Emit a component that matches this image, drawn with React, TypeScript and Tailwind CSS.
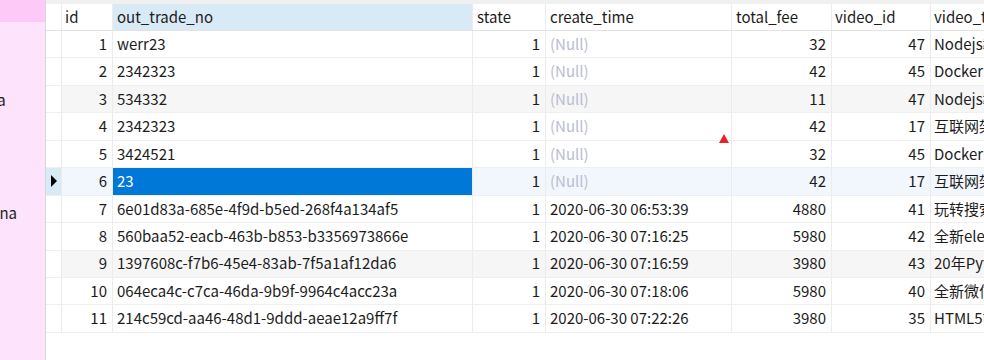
import React from 'react'

interface Row {
    id: number
    no: string
    state: number
    time: string | null
    fee: number
    vid: number
    title: string
}

const rows: Row[] = [
    { id: 1, no: 'werr23', state: 1, time: null, fee: 32, vid: 47, title: 'Nodejs教程' },
    { id: 2, no: '2342323', state: 1, time: null, fee: 42, vid: 45, title: 'Docker实战' },
    { id: 3, no: '534332', state: 1, time: null, fee: 11, vid: 47, title: 'Nodejs教程' },
    { id: 4, no: '2342323', state: 1, time: null, fee: 42, vid: 17, title: '互联网架构' },
    { id: 5, no: '3424521', state: 1, time: null, fee: 32, vid: 45, title: 'Docker实战' },
    { id: 6, no: '23', state: 1, time: null, fee: 42, vid: 17, title: '互联网架构' },
    { id: 7, no: '6e01d83a-685e-4f9d-b5ed-268f4a134af5', state: 1, time: '2020-06-30 06:53:39', fee: 4880, vid: 41, title: '玩转搜索框架' },
    { id: 8, no: '560baa52-eacb-463b-b853-b3356973866e', state: 1, time: '2020-06-30 07:16:25', fee: 5980, vid: 42, title: '全新elementUI' },
    { id: 9, no: '1397608c-f7b6-45e4-83ab-7f5a1af12da6', state: 1, time: '2020-06-30 07:16:59', fee: 3980, vid: 43, title: '20年Python' },
    { id: 10, no: '064eca4c-c7ca-46da-9b9f-9964c4acc23a', state: 1, time: '2020-06-30 07:18:06', fee: 5980, vid: 40, title: '全新微信小程序' },
    { id: 11, no: '214c59cd-aa46-48d1-9ddd-aeae12a9ff7f', state: 1, time: '2020-06-30 07:22:26', fee: 3980, vid: 35, title: 'HTML5前端' },
]

const cell = 'h-full flex items-center border-r border-[#ececec] shrink-0 overflow-hidden whitespace-nowrap'

export default function App() {
    return (
        <div className="flex w-[984px] h-[360px] overflow-hidden bg-white text-[15px] text-[#1c1c1c] font-['Noto_Sans_CJK_SC','Noto_Sans',sans-serif]">
            {/* Left sidebar (clipped) */}
            <div className="w-[45px] shrink-0 flex flex-col bg-[#fde3fb]">
                <div className="h-[22px] bg-[#fdc9f6]" />
                <div className="h-[65px]" />
                <div className="h-[27px] flex items-center -ml-[7px]">ja</div>
                <div className="h-[86px]" />
                <div className="h-[27px] flex items-center -ml-[9px]">ana</div>
            </div>

            {/* Grid */}
            <div className="relative flex-1 flex flex-col border-l border-[#d6d6d6] min-w-0">
                <div className="h-[4px] bg-[#f0f0f0] shrink-0" />

                {/* Header */}
                <div className="h-[27px] flex shrink-0 border-b border-[#e3e3e3]">
                    <div className={`${cell} w-[16px]`} />
                    <div className={`${cell} w-[51px] pl-[3px]`}>id</div>
                    <div className={`${cell} w-[360px] pl-[4px] bg-[#d9eaf7]`}>out_trade_no</div>
                    <div className={`${cell} w-[73px] pl-[4px]`}>state</div>
                    <div className={`${cell} w-[186px] pl-[4px]`}>create_time</div>
                    <div className={`${cell} w-[100px] pl-[4px]`}>total_fee</div>
                    <div className={`${cell} w-[99px] pl-[3px]`}>video_id</div>
                    <div className={`${cell} w-[120px] pl-[3px]`}>video_title</div>
                </div>

                {/* Rows */}
                {rows.map((r) => {
                    const sel = r.id === 6
                    const zebra = r.id === 3 || r.id === 9
                    const rowBg = sel ? 'bg-[#f1f7fd]' : zebra ? 'bg-[#f6f6f6]' : 'bg-white'
                    return (
                        <div key={r.id} className={`h-[27.45px] flex shrink-0 border-b border-[#efefef] ${rowBg}`}>
                            <div className={`${cell} w-[16px] justify-center ${sel ? 'bg-[#d9eaf7]' : 'bg-white'}`}>
                                {sel && (
                                    <svg width="8" height="12" viewBox="0 0 8 12">
                                        <path d="M1 0 L7 6 L1 12 Z" fill="#000" />
                                    </svg>
                                )}
                            </div>
                            <div className={`${cell} w-[51px] justify-end pr-[5px]`}>{r.id}</div>
                            <div className={`${cell} w-[360px] pl-[4px] ${sel ? 'bg-[#0078d7] text-white' : ''}`}>{r.no}</div>
                            <div className={`${cell} w-[73px] justify-end pr-[5px]`}>{r.state}</div>
                            <div className={`${cell} w-[186px] pl-[4px]`}>
                                {r.time ?? <span className="text-[#b9bdd2]">(Null)</span>}
                            </div>
                            <div className={`${cell} w-[100px] justify-end pr-[5px]`}>{r.fee}</div>
                            <div className={`${cell} w-[99px] justify-end pr-[5px]`}>{r.vid}</div>
                            <div className={`${cell} w-[120px] pl-[3px]`}>{r.title}</div>
                        </div>
                    )
                })}

                {/* Red marker */}
                <svg className="absolute left-[673px] top-[134px]" width="10" height="9" viewBox="0 0 10 9">
                    <path d="M5 0 L10 9 L0 9 Z" fill="#e8202a" />
                </svg>
            </div>
        </div>
    )
}
